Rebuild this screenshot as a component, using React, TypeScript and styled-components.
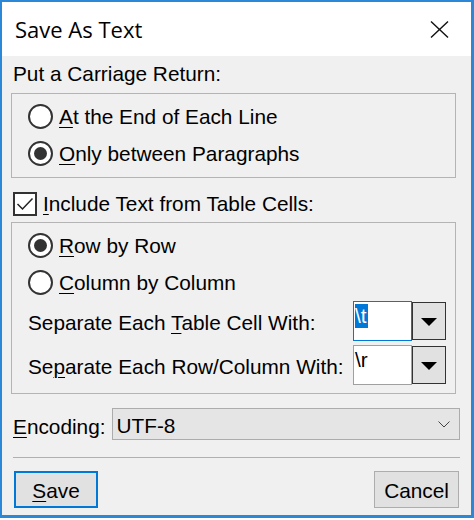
import React from "react";
import styled, { createGlobalStyle } from "styled-components";

const Global = createGlobalStyle`
  html, body { margin: 0; padding: 0; background: #ffffff; }
  body { font-family: "Liberation Sans", Arial, sans-serif; }
`;

const Window = styled.div`
  box-sizing: border-box;
  width: 474px;
  height: 518px;
  border-style: solid;
  border-color: #2b88d8;
  border-width: 2px 3px 3px 2px;
  background: #f0f0f0;
  display: flex;
  flex-direction: column;
`;

const TitleBar = styled.div`
  height: 54px;
  background: #ffffff;
  display: flex;
  align-items: center;
  justify-content: space-between;
  padding: 0 22px 0 13px;
`;

const Title = styled.div`
  font-family: "Open Sans", "Noto Sans", sans-serif;
  font-size: 22px;
  color: #000;
  margin-top: -1px;
`;

const CloseIcon = styled.svg`
  width: 19px;
  height: 17px;
  display: block;
`;

const Body = styled.div`
  display: flex;
  flex-direction: column;
  padding: 6px 11px 0 9px;
  font-family: "Liberation Sans", Arial, sans-serif;
  font-size: 20.8px;
  color: #000;
`;

const SectionLabel = styled.div`
  height: 24px;
  line-height: 24px;
  padding-left: 2px;
`;

const Group = styled.div<{ $mt: number; $pb: number }>`
  margin-top: ${(p) => p.$mt}px;
  margin-right: 4px;
  border: 1px solid #b4b4b4;
  padding: 4px 9px ${(p) => p.$pb}px 16px;
  display: flex;
  flex-direction: column;
`;

const OptionRow = styled.label`
  height: 37px;
  display: flex;
  align-items: center;
  gap: 6px;
  line-height: 37px;
`;

const RadioCircle = styled.span<{ $on?: boolean }>`
  box-sizing: border-box;
  width: 25px;
  height: 25px;
  border-radius: 50%;
  border: 2px solid #333;
  background: #fff;
  display: flex;
  align-items: center;
  justify-content: center;
  flex: none;
  &::after {
    content: "";
    width: 13px;
    height: 13px;
    border-radius: 50%;
    background: ${(p) => (p.$on ? "#333" : "transparent")};
  }
`;

const CheckRow = styled.label`
  height: 37px;
  margin-top: 7px;
  display: flex;
  align-items: center;
  gap: 6px;
  padding-left: 2px;
`;

const CheckBox = styled.span`
  box-sizing: border-box;
  width: 24px;
  height: 24px;
  border: 2px solid #333;
  background: #fff;
  display: flex;
  align-items: center;
  justify-content: center;
  flex: none;
`;

const U = styled.span`
  text-decoration: underline;
  text-underline-offset: 3px;
  text-decoration-thickness: 1px;
`;

const FieldRow = styled.div<{ $mt: number }>`
  height: 40px;
  margin-top: ${(p) => p.$mt}px;
  display: flex;
  align-items: center;
  justify-content: space-between;
`;

const FieldLabel = styled.span`
  margin-top: 3px;
`;

const Combo = styled.div`
  display: flex;
  height: 40px;
`;

const TextBox = styled.div<{ $focus?: boolean }>`
  box-sizing: border-box;
  width: 59px;
  height: 40px;
  border: 1px solid ${(p) => (p.$focus ? "#0078d7" : "#a0a0a0")};
  background: #fff;
  padding: 2px 0 0 1px;
  line-height: 24px;
`;

const Selected = styled.span`
  background: #0078d7;
  color: #fff;
  display: inline-block;
  padding-right: 1px;
`;

const DropButton = styled.div`
  box-sizing: border-box;
  width: 34px;
  height: 38px;
  margin-top: 1px;
  border: 1px solid #333;
  background: #e1e1e1;
  display: flex;
  align-items: center;
  justify-content: center;
  &::after {
    content: "";
    width: 0;
    height: 0;
    border-left: 8px solid transparent;
    border-right: 8px solid transparent;
    border-top: 8px solid #000;
    margin-top: 2px;
  }
`;

const EncodingRow = styled.div`
  margin-top: 14px;
  display: flex;
  align-items: center;
  padding-left: 2px;
  gap: 6px;
`;

const EncodingLabel = styled.span`
  margin-top: 5px;
`;

const Select = styled.div`
  box-sizing: border-box;
  flex: 1;
  height: 32px;
  border: 1px solid #acacac;
  background: #e5e5e5;
  display: flex;
  align-items: center;
  justify-content: space-between;
  padding: 3px 9px 0 4px;
`;

const Chevron = styled.svg`
  width: 12px;
  height: 7px;
  display: block;
  margin-top: -2px;
`;

const Separator = styled.div`
  margin-top: 17px;
  margin-left: 2px;
  height: 1px;
  background: #b0b0b0;
`;

const ButtonRow = styled.div`
  margin-top: 13px;
  display: flex;
  justify-content: space-between;
  padding-left: 3px;
  padding-right: 1px;
`;

const Button = styled.div<{ $default?: boolean }>`
  box-sizing: border-box;
  width: ${(p) => (p.$default ? 84 : 85)}px;
  height: 37px;
  background: #e1e1e1;
  border: ${(p) => (p.$default ? "2px solid #0078d7" : "1px solid #adadad")};
  display: flex;
  align-items: center;
  justify-content: center;
  padding-top: 2px;
`;

export default function App() {
  return (
    <>
      <Global />
      <Window>
        <TitleBar>
          <Title>Save As Text</Title>
          <CloseIcon viewBox="0 0 19 17">
            <path d="M1 0.5 L18 16.5 M18 0.5 L1 16.5" stroke="#111" strokeWidth="1.4" fill="none" />
          </CloseIcon>
        </TitleBar>
        <Body>
          <SectionLabel>Put a Carriage Return:</SectionLabel>
          <Group $mt={7} $pb={5}>
            <OptionRow>
              <RadioCircle />
              <span>
                <U>A</U>t the End of Each Line
              </span>
            </OptionRow>
            <OptionRow>
              <RadioCircle $on />
              <span>
                <U>O</U>nly between Paragraphs
              </span>
            </OptionRow>
          </Group>
          <CheckRow>
            <CheckBox>
              <svg width="18" height="14" viewBox="0 0 18 14">
                <path d="M1.5 7 L6.5 12 L16.5 1.5" stroke="#222" strokeWidth="1.5" fill="none" />
              </svg>
            </CheckBox>
            <span>
              <U>I</U>nclude Text from Table Cells:
            </span>
          </CheckRow>
          <Group $mt={0} $pb={8}>
            <OptionRow>
              <RadioCircle $on />
              <span>
                <U>R</U>ow by Row
              </span>
            </OptionRow>
            <OptionRow>
              <RadioCircle />
              <span>
                <U>C</U>olumn by Column
              </span>
            </OptionRow>
            <FieldRow $mt={0}>
              <FieldLabel>
                Separate Each <U>T</U>able Cell With:
              </FieldLabel>
              <Combo>
                <TextBox $focus>
                  <Selected>\t</Selected>
                </TextBox>
                <DropButton />
              </Combo>
            </FieldRow>
            <FieldRow $mt={4}>
              <FieldLabel>
                Se<U>p</U>arate Each Row/Column With:
              </FieldLabel>
              <Combo>
                <TextBox>\r</TextBox>
                <DropButton />
              </Combo>
            </FieldRow>
          </Group>
          <EncodingRow>
            <EncodingLabel>
              <U>E</U>ncoding:
            </EncodingLabel>
            <Select>
              <span>UTF-8</span>
              <Chevron viewBox="0 0 12 7">
                <path d="M0.5 0.5 L6 6 L11.5 0.5" stroke="#444" strokeWidth="1" fill="none" />
              </Chevron>
            </Select>
          </EncodingRow>
          <Separator />
          <ButtonRow>
            <Button $default>
              <span>
                <U>S</U>ave
              </span>
            </Button>
            <Button>Cancel</Button>
          </ButtonRow>
        </Body>
      </Window>
    </>
  );
}
